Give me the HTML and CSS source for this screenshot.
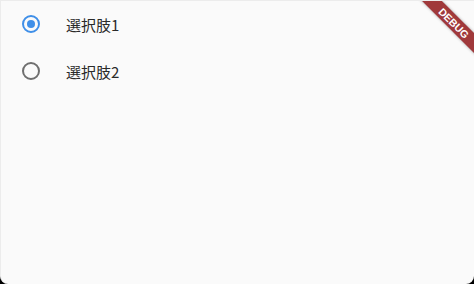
FILE: index.html
```html
<!DOCTYPE html>
<html>
<head>
<meta charset="utf-8">
<link rel="stylesheet" href="styles.css">
</head>
<body>
<div class="screen">
  <div class="list">
    <label class="row">
      <span class="radio selected"><span class="dot"></span></span>
      <span class="label">選択肢1</span>
    </label>
    <label class="row">
      <span class="radio"></span>
      <span class="label">選択肢2</span>
    </label>
  </div>
  <div class="banner"><span>DEBUG</span></div>
</div>
</body>
</html>
```
FILE: styles.css
```css
html, body {
  margin: 0;
  padding: 0;
  background: #000;
  width: 474px;
  height: 284px;
  overflow: hidden;
}
.screen {
  position: relative;
  width: 474px;
  height: 284px;
  box-sizing: border-box;
  background: #fafafa;
  border-top: 1px solid #ececec;
  border-left: 1px solid #ececec;
  border-radius: 0 0 8px 8px;
  overflow: hidden;
  font-family: "Noto Sans CJK JP", "Noto Sans", sans-serif;
}
.list {
  display: flex;
  flex-direction: column;
}
.row {
  display: flex;
  align-items: center;
  height: 48px;
  padding-left: 21px;
  box-sizing: border-box;
}
.row:first-child {
  height: 46px;
}
.radio {
  width: 18px;
  height: 18px;
  box-sizing: border-box;
  border: 2px solid #6f6f6f;
  border-radius: 50%;
  display: flex;
  align-items: center;
  justify-content: center;
  flex: none;
}
.radio.selected {
  border-color: #3f8fe8;
}
.dot {
  width: 8px;
  height: 8px;
  border-radius: 50%;
  background: #3f8fe8;
}
.label {
  margin-left: 26px;
  font-size: 15px;
  color: #2a2a2a;
  line-height: 1;
}
.banner {
  position: absolute;
  top: -1px;
  right: 0;
  width: 60px;
  height: 60px;
  overflow: hidden;
}
.banner span {
  position: absolute;
  left: -10px;
  top: 16px;
  width: 100px;
  height: 14px;
  background: #a0393b;
  color: #fff;
  font-family: "Liberation Sans", sans-serif;
  font-weight: bold;
  font-size: 10.5px;
  line-height: 14px;
  text-align: center;
  transform: rotate(45deg);
  box-shadow: 0 0 3px rgba(0,0,0,0.35);
}
```
